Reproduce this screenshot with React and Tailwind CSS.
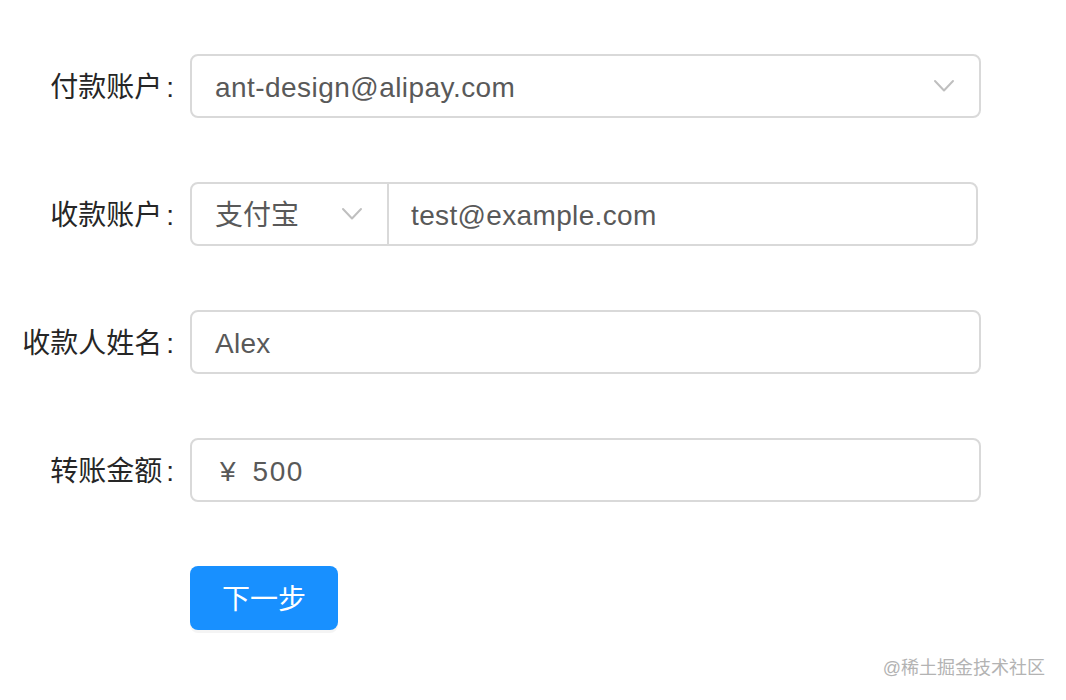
import React from 'react';

const font = { fontFamily: '"Liberation Sans", "Noto Sans CJK SC", sans-serif' };

/* ── small chevron used by the selects ── */
const Chevron = () => (
  <svg width="22" height="14" viewBox="0 0 22 14" fill="none" className="shrink-0">
    <path d="M2 2 L11 11.5 L20 2" stroke="#bfbfbf" strokeWidth="2" strokeLinecap="round" strokeLinejoin="round" />
  </svg>
);

const Label = ({ children }) => (
  <div className="w-[190px] shrink-0 flex justify-end items-center pt-[4px] text-[28px] text-[#262626]">
    <span>{children}</span>
    <span className="ml-[4px] mr-[16px]">:</span>
  </div>
);

const Row = ({ label, children }) => (
  <div className="flex items-stretch h-[64px]">
    <Label>{label}</Label>
    {children}
  </div>
);

export default function App() {
  return (
    <div className="relative w-[1066px] h-[700px] bg-white overflow-hidden" style={font}>
      <div className="flex flex-col gap-[64px] pt-[54px]">
        <Row label="付款账户">
          <div className="w-[791px] h-[64px] border-2 border-[#d9d9d9] rounded-[8px] flex items-center justify-between pl-[23px] pr-[24px] text-[28px] text-[#595959]">
            <span className="pt-[4px] tracking-[0.45px]">ant-design@alipay.com</span>
            <Chevron />
          </div>
        </Row>

        <Row label="收款账户">
          <div className="w-[788px] h-[64px] border-2 border-[#d9d9d9] rounded-[8px] flex text-[28px] text-[#595959]">
            <div className="w-[197px] flex items-center justify-between pl-[23px] pr-[24px] border-r-2 border-[#d9d9d9]">
              <span className="pt-[4px]">支付宝</span>
              <Chevron />
            </div>
            <div className="flex items-center pl-[22px] pt-[4px] tracking-[0.35px]">test@example.com</div>
          </div>
        </Row>

        <Row label="收款人姓名">
          <div className="w-[791px] h-[64px] border-2 border-[#d9d9d9] rounded-[8px] flex items-center pl-[23px] pt-[4px] text-[28px] text-[#595959] tracking-[0.3px]">
            Alex
          </div>
        </Row>

        <Row label="转账金额">
          <div className="w-[791px] h-[64px] border-2 border-[#d9d9d9] rounded-[8px] flex items-center pl-[28px] pt-[4px] text-[28px] text-[#595959]">
            <span className="mr-[17px]">¥</span>
            <span className="tracking-[1.5px]">500</span>
          </div>
        </Row>

        <div className="flex h-[64px]">
          <div className="w-[190px] shrink-0" />
          <button className="w-[148px] h-[64px] pt-[3px] rounded-[8px] bg-[#1890ff] text-white text-[28px] shadow-[0_3px_0_rgba(0,0,0,0.045)]">
            下一步
          </button>
        </div>
      </div>

      <div className="absolute right-[21px] bottom-[18px] text-[18px] text-[#b3b3b3]">
        @稀土掘金技术社区
      </div>
    </div>
  );
}
